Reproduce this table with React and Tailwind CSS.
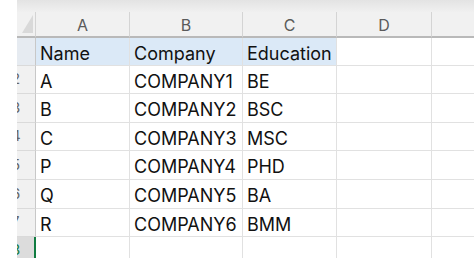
import React from "react";

const cols = [
  { key: "A", w: "w-[94px]" },
  { key: "B", w: "w-[113px]" },
  { key: "C", w: "w-[94px]" },
  { key: "D", w: "w-[95px]" },
];

const rows = [
  { n: 1, h: "h-[28px]", cells: ["Name", "Company", "Education"], head: true },
  { n: 2, h: "h-[28px]", cells: ["A", "COMPANY1", "BE"] },
  { n: 3, h: "h-[29px]", cells: ["B", "COMPANY2", "BSC"] },
  { n: 4, h: "h-[28px]", cells: ["C", "COMPANY3", "MSC"] },
  { n: 5, h: "h-[29px]", cells: ["P", "COMPANY4", "PHD"] },
  { n: 6, h: "h-[29px]", cells: ["Q", "COMPANY5", "BA"] },
  { n: 7, h: "h-[28px]", cells: ["R", "COMPANY6", "BMM"] },
  { n: 8, h: "h-[28px]", cells: ["", "", ""], active: true },
];

export default function App() {
  return (
    <div
      className="w-[474px] h-[258px] overflow-hidden bg-white flex flex-col"
      style={{ fontFamily: "Inter, 'Noto Sans', sans-serif" }}
    >
      {/* toolbar edge */}
      <div className="h-[12px] shrink-0 flex">
        <div className="w-[17px] bg-white" />
        <div className="flex-1 bg-gradient-to-b from-[#e3e3e3] to-[#f0f0f0]" />
      </div>

      {/* column headers */}
      <div className="flex h-[26px] shrink-0">
        <div className="w-[17px] bg-white" />
        <div className="w-[19px] bg-[#f1f1f1] border-b-2 border-[#b9b9b9] border-r border-r-[#d4d4d4] relative">
          <svg className="absolute left-[5px] top-[3px]" width="11" height="18" viewBox="0 0 11 18">
            <polygon points="11,0 11,18 0,18" fill="#d9d9d9" />
          </svg>
        </div>
        {cols.map((c) => (
          <div
            key={c.key}
            className={`${c.w} shrink-0 bg-[#f1f1f1] border-b-2 border-[#b9b9b9] border-r border-r-[#d4d4d4] flex items-center justify-center text-[16px] text-[#5a5a5a] pt-[2px]`}
          >
            {c.key}
          </div>
        ))}
        <div className="flex-1 bg-[#f1f1f1] border-b-2 border-[#b9b9b9]" />
      </div>

      {/* grid body */}
      {rows.map((r) => (
        <div key={r.n} className={`flex ${r.h} shrink-0`}>
          <div className="w-[17px] bg-white" />
          <div
            className={`w-[19px] shrink-0 overflow-hidden border-b border-[#dadada] flex items-center text-[15px] ${
              r.active
                ? "bg-[#dcdcdc] text-[#107c41] border-r-2 border-r-[#107c41]"
                : r.head
                ? "bg-[#e6ebf1] text-[#666] border-r border-r-[#c8c8c8]"
                : "bg-[#f1f1f1] text-[#666] border-r border-r-[#c8c8c8]"
            }`}
          >
            <span className="ml-[-6px]">{r.n}</span>
          </div>
          {r.cells.map((t, i) => (
            <div
              key={i}
              className={`${cols[i].w} shrink-0 border-b border-r border-[#e1e1e1] flex items-center pl-[4px] pt-[3px] text-[18px] text-[#111] whitespace-nowrap ${
                r.head ? "bg-[#dbe9f7]" : ""
              }`}
            >
              {t}
            </div>
          ))}
          <div className="w-[95px] shrink-0 border-b border-r border-[#e1e1e1]" />
          <div className="flex-1 border-b border-[#e1e1e1]" />
        </div>
      ))}
    </div>
  );
}
